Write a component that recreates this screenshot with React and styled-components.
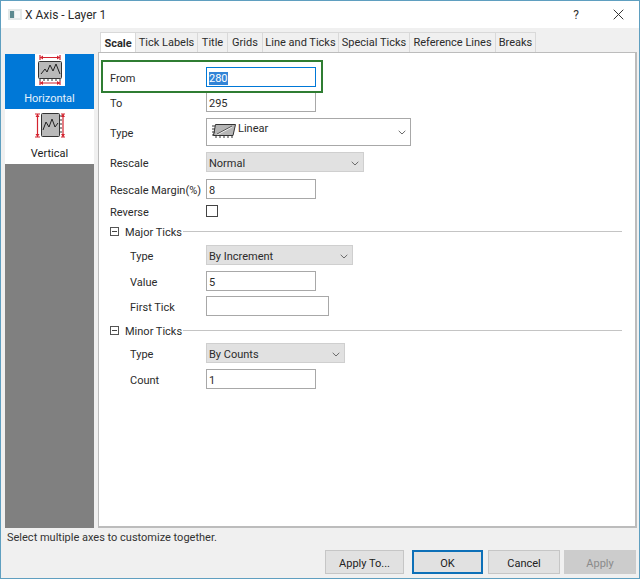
import React from 'react';
import styled, { createGlobalStyle } from 'styled-components';

const TABS = [
  { label: 'Scale', width: 36, active: true },
  { label: 'Tick Labels', width: 62 },
  { label: 'Title', width: 30 },
  { label: 'Grids', width: 35 },
  { label: 'Line and Ticks', width: 76 },
  { label: 'Special Ticks', width: 71 },
  { label: 'Reference Lines', width: 86 },
  { label: 'Breaks', width: 40 },
];

const GlobalStyle = createGlobalStyle`
  html, body { margin: 0; padding: 0; background: #fff; }
  body { font-family: "Roboto", "Open Sans", "Liberation Sans", sans-serif; font-size: 11px; color: #2b2b2b; }
`;

const Window = styled.div`
  box-sizing: border-box;
  width: 640px;
  height: 579px;
  border: 1px solid #5f9fc0;
  display: flex;
  flex-direction: column;
  background: #f0f0f0;
`;

const TitleBar = styled.div`
  height: 27px;
  flex: 0 0 auto;
  background: #fff;
  display: flex;
  align-items: center;
  padding-left: 7px;
  font-size: 12px;
`;

const TitleText = styled.span`
  margin-left: 3px;
  flex: 1;
`;

const TitleButton = styled.button`
  border: 0;
  background: none;
  padding: 0;
  font: inherit;
  font-size: 12px;
  color: #333;
  width: ${props => props.$width}px;
  height: 20px;
  display: flex;
  align-items: center;
  justify-content: center;
`;

const Main = styled.div`
  flex: 0 0 auto;
  display: flex;
  padding: 4px 2px 0 4px;
  height: 500px;
  box-sizing: border-box;
`;

const Sidebar = styled.div`
  width: 89px;
  margin-top: 22px;
  background: #808080;
  display: flex;
  flex-direction: column;
`;

const SideItem = styled.div`
  height: 55px;
  box-sizing: border-box;
  padding-top: ${props => (props.$active ? 0 : 4)}px;
  background: ${props => (props.$active ? '#0078d7' : '#fff')};
  color: ${props => (props.$active ? '#e4f1fb' : '#222')};
  display: flex;
  flex-direction: column;
  align-items: center;
`;

const SideLabel = styled.span`
  margin-top: ${props => props.$gap}px;
`;

const TabArea = styled.div`
  flex: 1;
  margin-left: 4px;
  display: flex;
  flex-direction: column;
  min-width: 0;
`;

const TabStrip = styled.div`
  height: 20px;
  display: flex;
  padding-left: 2px;
`;

const Tab = styled.div`
  width: ${props => props.$width}px;
  box-sizing: border-box;
  border: 1px solid #d9d9d9;
  border-left-width: ${props => (props.$active ? 1 : 0)}px;
  border-bottom: 0;
  background: ${props => (props.$active ? '#fff' : '#f0f0f0')};
  font-weight: ${props => (props.$active ? 700 : 400)};
  display: flex;
  align-items: center;
  justify-content: center;
  white-space: nowrap;
  margin-bottom: ${props => (props.$active ? -1 : 0)}px;
  position: relative;
`;

const Panel = styled.div`
  flex: 1;
  box-sizing: border-box;
  background: #fff;
  border: 1px solid #bcbcbc;
  border-width: 1px 2px 2px 1px;
  position: relative;
  padding: 14px 0 0 11px;
`;

const Row = styled.div`
  display: flex;
  align-items: center;
  height: ${props => props.$height || 20}px;
  margin-top: ${props => props.$top || 0}px;
  padding-left: ${props => props.$indent || 0}px;
`;

const Label = styled.span`
  width: ${props => 96 - (props.$indent || 0)}px;
  padding-top: 2px;
  white-space: nowrap;
`;

const Input = styled.div`
  box-sizing: border-box;
  width: ${props => props.$width}px;
  height: 20px;
  border: 1px solid ${props => (props.$focus ? '#0078d7' : '#a8a8a8')};
  background: #fff;
  padding: 2px 0 0 2px;
  display: flex;
  align-items: center;
`;

const Selected = styled.span`
  background: #3284d6;
  color: #fff;
`;

const Combo = styled.div`
  box-sizing: border-box;
  width: ${props => props.$width}px;
  height: 20px;
  background: #e1e1e1;
  border: 1px solid #cfcfcf;
  padding: 2px 4px 0 2px;
  display: flex;
  align-items: center;
  justify-content: space-between;
`;

const ImageCombo = styled.div`
  box-sizing: border-box;
  width: 205px;
  height: 28px;
  background: #fff;
  border: 1px solid #a8a8a8;
  padding: 1px 4px 0 5px;
  display: flex;
  justify-content: space-between;
`;

const LinearValue = styled.div`
  display: flex;
  gap: 2px;
  align-items: flex-start;
  line-height: 17px;
`;

const ComboArrow = styled.span`
  display: flex;
  align-self: center;
`;

const Checkbox = styled.div`
  box-sizing: border-box;
  width: 12px;
  height: 12px;
  border: 1px solid #444;
  background: #fff;
`;

const GroupHeader = styled.div`
  display: flex;
  align-items: center;
  height: 14px;
  margin: ${props => props.$top}px 13px 0 0;
`;

const GroupText = styled.span`
  margin: 2px 1px 0 6px;
`;

const GroupLine = styled.span`
  flex: 1;
  height: 1px;
  background: #c4c4c4;
`;

const Collapse = styled.span`
  box-sizing: border-box;
  width: 9px;
  height: 9px;
  border: 1px solid #555;
  display: flex;
  align-items: center;
  justify-content: center;
  &::after {
    content: '';
    width: 5px;
    height: 1px;
    background: #444;
  }
`;

const Highlight = styled.div`
  position: absolute;
  left: 2px;
  top: 7px;
  width: 222px;
  height: 33px;
  box-sizing: border-box;
  border: 2px solid #2f7d32;
  pointer-events: none;
`;

const Status = styled.div`
  height: 16px;
  margin: 2px 0 0 6px;
  line-height: 16px;
  color: #333;
`;

const Footer = styled.div`
  display: flex;
  justify-content: flex-end;
  padding: 4px 3px 0 0;
`;

const Button = styled.button`
  box-sizing: border-box;
  width: ${props => props.$width}px;
  height: 24px;
  margin-left: ${props => props.$gap}px;
  padding: 2px 0 0;
  font: inherit;
  background: ${props => (props.$disabled ? '#cccccc' : '#e1e1e1')};
  color: ${props => (props.$disabled ? '#8a8a8a' : '#222')};
  border: ${props => (props.$primary ? '2px solid #0d70b8' : props.$disabled ? '1px solid #cccccc' : '1px solid #c6c6c6')};
`;

const Chevron = () => (
  <svg width="8" height="5" viewBox="0 0 8 5">
    <path d="M0.7 0.8 L4 4 L7.3 0.8" fill="none" stroke="#6a6a6a" strokeWidth="1" />
  </svg>
);

const WindowIcon = () => (
  <svg width="14" height="11" viewBox="0 0 14 11">
    <rect x="0" y="0" width="14" height="11" fill="#e3e9e9" />
    <rect x="2" y="2" width="4" height="7" fill="#5c8a90" />
    <rect x="7" y="2" width="5" height="7" fill="#f6f8f8" />
  </svg>
);

const CloseIcon = () => (
  <svg width="11" height="11" viewBox="0 0 11 11">
    <path d="M0.7 0.7 L10.3 10.3 M10.3 0.7 L0.7 10.3" stroke="#333" strokeWidth="1" />
  </svg>
);

const HorizontalIcon = () => (
  <svg width="30" height="32" viewBox="0 0 30 32">
    <rect width="30" height="32" fill="#fff" />
    <rect x="3.5" y="7.5" width="23" height="17" rx="1" fill="#b9b9b9" stroke="#333" />
    <path d="M6 20 L10 15 L12 18 L15 11 L18 17 L21 10 L25 20" fill="none" stroke="#222" />
    <path d="M5 25v2M9 25v2M13 25v2M17 25v2M21 25v2M25 25v2" stroke="#333" />
    <path d="M5 3.5H25M5 1v5M25 1v5M5 29H25M5 27v4M25 27v4" stroke="#d3232f" strokeWidth="1.2" />
    <path d="M5 3.5l3-2v4zM25 3.5l-3-2v4zM5 29l3-2v4zM25 29l-3-2v4z" fill="#d3232f" />
  </svg>
);

const VerticalIcon = () => (
  <svg width="30" height="25" viewBox="0 0 30 25">
    <rect x="6.5" y="0.5" width="18" height="23" rx="1" fill="#b9b9b9" stroke="#333" />
    <path d="M8 17 L11 9 L14 14 L17 6 L20 14 L23 10" fill="none" stroke="#222" />
    <path d="M25 3h2M25 7h2M25 11h2M25 15h2M25 19h2" stroke="#333" />
    <path d="M2.5 1V24M0 1h5M0 24h5M28 1V24M26 1h4M26 24h4" stroke="#d3232f" strokeWidth="1.2" />
    <path d="M2.5 1l-2 3h4zM2.5 24l-2-3h4zM28 1l-2 3h4zM28 24l-2-3h4z" fill="#d3232f" />
  </svg>
);

const LinearIcon = () => (
  <svg width="24" height="16" viewBox="0 0 24 16" style={{ marginTop: 3 }}>
    <path d="M3.5 1.5H23.5L21 12.5H1.5Z" fill="#b5b5b5" stroke="#333" />
    <path d="M5 11.5 L20 3.5" stroke="#f4f4f4" strokeWidth="1.6" />
    <path d="M5 11 L20 3" stroke="#222" strokeWidth="0.8" />
    <path d="M4 13v2M8 13v2M12 13v2M16 13v2M20 13v2" stroke="#333" />
    <path d="M0 3h3M0 6h3M0 9h3M0 12h2" stroke="#333" />
  </svg>
);

const FieldRow = ({ label, indent, top, width, children }) => (
  <Row $top={top} $indent={indent}>
    <Label $indent={indent}>{label}</Label>
    <Input $width={width}>{children}</Input>
  </Row>
);

const ComboRow = ({ label, indent, top, width, value }) => (
  <Row $top={top} $indent={indent}>
    <Label $indent={indent}>{label}</Label>
    <Combo $width={width}>
      {value}
      <Chevron />
    </Combo>
  </Row>
);

const Group = ({ title, top }) => (
  <GroupHeader $top={top}>
    <Collapse />
    <GroupText>{title}</GroupText>
    <GroupLine />
  </GroupHeader>
);

const App = () => (
  <Window>
    <GlobalStyle />
    <TitleBar>
      <WindowIcon />
      <TitleText>X Axis - Layer 1</TitleText>
      <TitleButton $width={42}>?</TitleButton>
      <TitleButton $width={42}>
        <CloseIcon />
      </TitleButton>
    </TitleBar>
    <Main>
      <Sidebar>
        <SideItem $active>
          <HorizontalIcon />
          <SideLabel $gap={6}>Horizontal</SideLabel>
        </SideItem>
        <SideItem>
          <VerticalIcon />
          <SideLabel $gap={9}>Vertical</SideLabel>
        </SideItem>
      </Sidebar>
      <TabArea>
        <TabStrip>
          {TABS.map(tab => (
            <Tab key={tab.label} $width={tab.width} $active={tab.active}>
              {tab.label}
            </Tab>
          ))}
        </TabStrip>
        <Panel>
          <Highlight />
          <Row>
            <Label>From</Label>
            <Input $width={110} $focus>
              <Selected>280</Selected>
            </Input>
          </Row>
          <FieldRow label="To" top={5} width={110}>295</FieldRow>
          <Row $top={6} $height={28}>
            <Label>Type</Label>
            <ImageCombo>
              <LinearValue>
                <LinearIcon />
                Linear
              </LinearValue>
              <ComboArrow>
                <Chevron />
              </ComboArrow>
            </ImageCombo>
          </Row>
          <ComboRow label="Rescale" top={6} width={158} value="Normal" />
          <FieldRow label="Rescale Margin(%)" top={7} width={110}>8</FieldRow>
          <Row $top={2}>
            <Label>Reverse</Label>
            <Checkbox />
          </Row>
          <Group title="Major Ticks" top={3} />
          <ComboRow label="Type" indent={20} top={7} width={147} value="By Increment" />
          <FieldRow label="Value" indent={20} top={6} width={110}>5</FieldRow>
          <FieldRow label="First Tick" indent={20} top={5} width={123} />
          <Group title="Minor Ticks" top={7} />
          <ComboRow label="Type" indent={20} top={6} width={139} value="By Counts" />
          <FieldRow label="Count" indent={20} top={6} width={110}>1</FieldRow>
        </Panel>
      </TabArea>
    </Main>
    <Status>Select multiple axes to customize together.</Status>
    <Footer>
      <Button $width={79}>Apply To...</Button>
      <Button $width={71} $gap={8} $primary>OK</Button>
      <Button $width={72} $gap={5}>Cancel</Button>
      <Button $width={72} $gap={4} $disabled>Apply</Button>
    </Footer>
  </Window>
);

export default App;
